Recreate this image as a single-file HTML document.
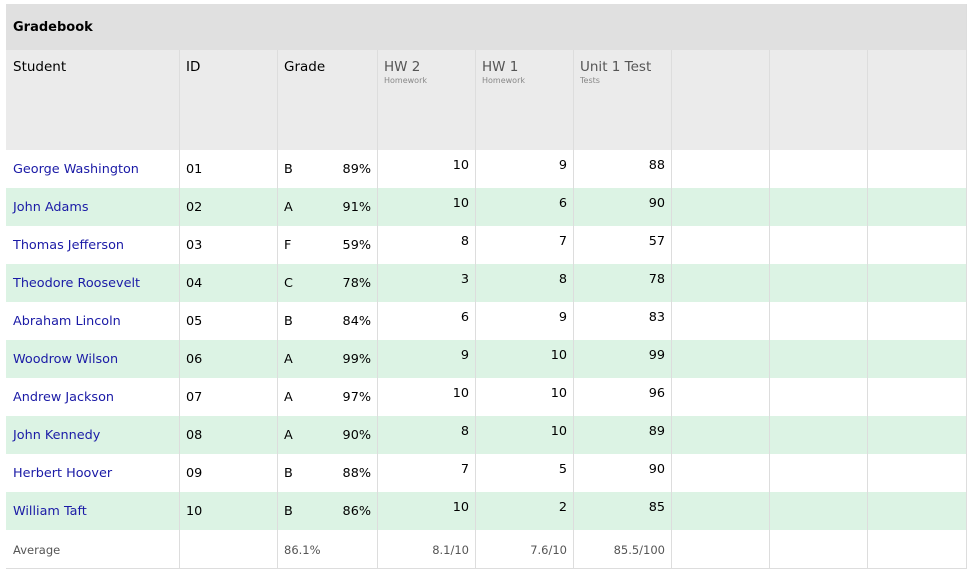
<!DOCTYPE html>
<html><head><style>
body{margin:0;background:#fff;font-family:"DejaVu Sans","Liberation Sans",sans-serif;font-size:12.8px;color:#000}
#w{position:absolute;left:6px;top:4px;width:960px;height:564px;border-right:1px solid #ddd;border-bottom:1px solid #ddd}
.title{position:absolute;left:0;top:0;width:960px;height:46px;background:#e0e0e0;font-weight:bold;font-size:13px;line-height:48px;padding-left:7px;box-sizing:border-box}
.hdr{position:absolute;left:0;top:46px;width:960px;height:100px;background:#ebebeb}
.row{position:absolute;left:0;width:960px;height:38px}
.g{background:#dcf3e4}
.vl{position:absolute;top:46px;width:1px;height:518px;background:#ddd}
.c{position:absolute;white-space:nowrap}
a{color:#1a1aa6;text-decoration:none}
.h{color:#555;font-size:13.5px}
.sub{color:#888;font-size:8px;position:absolute}
.avg{color:#555;font-size:11.5px}
</style></head><body>
<div id="w">
<div class="title">Gradebook</div>
<div class="hdr"></div>
</div>
<div id="rows"></div>
<script>
var d=[["George Washington","01","B","89%",10,9,88],["John Adams","02","A","91%",10,6,90],["Thomas Jefferson","03","F","59%",8,7,57],["Theodore Roosevelt","04","C","78%",3,8,78],["Abraham Lincoln","05","B","84%",6,9,83],["Woodrow Wilson","06","A","99%",9,10,99],["Andrew Jackson","07","A","97%",10,10,96],["John Kennedy","08","A","90%",8,10,89],["Herbert Hoover","09","B","88%",7,5,90],["William Taft","10","B","86%",10,2,85]];
var h='';
for(var i=0;i<10;i++){var y=150+i*38,r=d[i];
h+='<div class="row'+(i%2?' g':'')+'" style="left:6px;top:'+y+'px"></div>';
h+='<div class="c" style="left:13px;top:'+(y+12)+'px"><a>'+r[0]+'</a></div>';
h+='<div class="c" style="left:186px;top:'+(y+12)+'px">'+r[1]+'</div>';
h+='<div class="c" style="left:284px;top:'+(y+12)+'px">'+r[2]+'</div>';
h+='<div class="c" style="right:'+(971-371)+'px;top:'+(y+12)+'px">'+r[3]+'</div>';
h+='<div class="c" style="right:'+(971-469)+'px;top:'+(y+8)+'px">'+r[4]+'</div>';
h+='<div class="c" style="right:'+(971-567)+'px;top:'+(y+8)+'px">'+r[5]+'</div>';
h+='<div class="c" style="right:'+(971-665)+'px;top:'+(y+8)+'px">'+r[6]+'</div>';}
h+='<div class="c avg" style="left:13px;top:543px">Average</div>';
h+='<div class="c avg" style="left:284px;top:543px">86.1%</div>';
h+='<div class="c avg" style="right:502px;top:543px">8.1/10</div>';
h+='<div class="c avg" style="right:404px;top:543px">7.6/10</div>';
h+='<div class="c avg" style="right:306px;top:543px">85.5/100</div>';
h+='<div class="c" style="left:13px;top:59px;font-size:13.5px">Student</div>';
h+='<div class="c" style="left:186px;top:59px;font-size:13.5px">ID</div>';
h+='<div class="c" style="left:284px;top:59px;font-size:13.5px">Grade</div>';
var hd=[["HW 2","Homework",384],["HW 1","Homework",482],["Unit 1 Test","Tests",580]];
for(var k=0;k<3;k++){h+='<div class="c h" style="left:'+hd[k][2]+'px;top:59px">'+hd[k][0]+'</div><div class="c sub" style="left:'+hd[k][2]+'px;top:76px">'+hd[k][1]+'</div>';}
var xs=[179,277,377,475,573,671,769,867];
for(var j=0;j<xs.length;j++)h+='<div class="vl" style="left:'+xs[j]+'px;top:50px"></div>';
document.getElementById('rows').innerHTML=h;
</script>
</body></html>
